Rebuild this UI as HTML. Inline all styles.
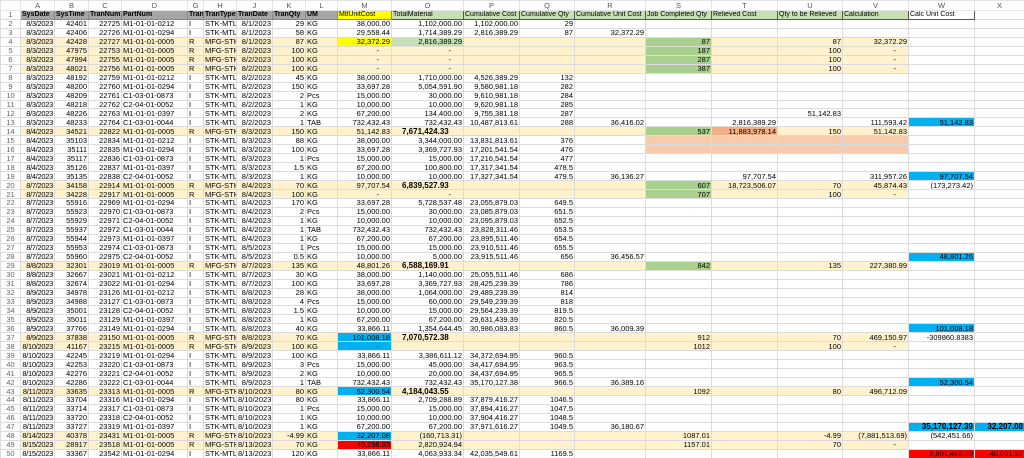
<!DOCTYPE html>
<html><head><meta charset="utf-8"><style>
html,body{margin:0;padding:0;background:#fff;width:1024px;height:458px;overflow:hidden}
table{border-collapse:collapse;table-layout:fixed;width:1024px;font:7.5px "Liberation Sans",sans-serif;color:#000}
td{border:1px solid #dcdcdc;padding:0 1px;line-height:7px;white-space:nowrap;overflow:hidden;text-align:right}
tr{height:8.96px}
tr.h{height:10px}
tr.h td{text-align:center;color:#555;font-size:7.5px;border-color:#e4e4e4;background:#fff}
td:nth-child(1){text-align:center;color:#666;background:#fff;padding:0}
td:nth-child(2){letter-spacing:-0.3px}
td:nth-child(5),td:nth-child(6),td:nth-child(7),td:nth-child(10){text-align:left}
tr.c td{background:#fff2cc}
tr.c td:nth-child(1),tr.c td:nth-child(20),tr.c td:nth-child(21){background:#fff}
tr.c td:nth-child(16){background:#a9d08e}
tr.c.n td:nth-child(16){background:#fff2cc}
tr.r1 td{text-align:left;font-weight:bold;font-size:7px;background:#a6a6a6;border-color:#888;letter-spacing:0}
tr.r1 td:nth-child(1){background:#fff;font-weight:normal;text-align:center;font-size:7.5px;border-color:#dcdcdc}
td.gh{background:#c6e0b4!important;border-color:#555!important;font-weight:normal!important}
td.yh{background:#ffff00!important;border-color:#888!important;font-weight:normal!important}
td.wh{background:#fff!important;border-color:#555!important;font-weight:normal!important}
.y{background:#ffff00!important}
.g{background:#c6e0b4!important}
.bl{background:#00b0f0!important}
.rd{background:#ff0000!important}
.o{background:#f8cbad!important}
.o2{background:#f4b084!important}
.b{font-weight:bold;font-size:8px;text-align:left!important;padding-left:10px}
.bb{font-weight:bold;font-size:8px}
.d{padding-right:12px}
</style></head><body>
<table>
<colgroup><col style="width:20px"><col style="width:34px"><col style="width:34px"><col style="width:33px"><col style="width:66px"><col style="width:16px"><col style="width:33px"><col style="width:36px"><col style="width:33px"><col style="width:32px"><col style="width:54px"><col style="width:72px"><col style="width:56px"><col style="width:55px"><col style="width:71px"><col style="width:66px"><col style="width:66px"><col style="width:65px"><col style="width:66px"><col style="width:66px"><col style="width:50px"></colgroup>
<tr class="h"><td><td>A<td>B<td>C<td>D<td>G<td>H<td>J<td>K<td>L<td>M<td>O<td>P<td>Q<td>R<td>S<td>T<td>U<td>V<td>W<td>X</tr>
<tr class="r1"><td>1<td>SysDate<td>SysTime<td>TranNum<td>PartNum<td>Tran<td>TranType<td>TranDate<td>TranQty<td>UM<td class="yh">MtlUnitCost<td class="gh">TotalMaterial<td class="gh">Cumulative Cost<td class="gh">Cumulative Qty<td class="gh">Cumulative Unit Cost<td class="gh">Job Completed Qty<td class="gh">Relieved Cost<td class="gh">Qty to be Relieved<td class="gh">Calculation<td class="wh">Calc Unit Cost<td style="background:#fff;border-color:#dcdcdc"></tr>
<tr><td>2<td>8/3/2023<td>42401<td>22725<td>M1-01-01-0212<td>I<td>STK-MTL<td>8/1/2023<td>29<td>KG<td>38,000.00<td>1,102,000.00<td>1,102,000.00<td>29<td><td><td><td><td><td><td></tr>
<tr><td>3<td>8/3/2023<td>42406<td>22726<td>M1-01-01-0294<td>I<td>STK-MTL<td>8/1/2023<td>58<td>KG<td>29,558.44<td>1,714,389.29<td>2,816,389.29<td>87<td>32,372.29<td><td><td><td><td><td></tr>
<tr class="c"><td>4<td>8/3/2023<td>42428<td>22727<td>M1-01-01-0005<td>R<td>MFG-STK<td>8/1/2023<td>87<td>KG<td class="y">32,372.29<td class="g">2,816,389.29<td><td><td><td>87<td><td>87<td>32,372.29<td><td></tr>
<tr class="c"><td>5<td>8/3/2023<td>47975<td>22753<td>M1-01-01-0005<td>R<td>MFG-STK<td>8/2/2023<td>100<td>KG<td class="d">-<td class="d">-<td><td><td><td>187<td><td>100<td class="d">-<td><td></tr>
<tr class="c"><td>6<td>8/3/2023<td>47994<td>22755<td>M1-01-01-0005<td>R<td>MFG-STK<td>8/2/2023<td>100<td>KG<td class="d">-<td class="d">-<td><td><td><td>287<td><td>100<td class="d">-<td><td></tr>
<tr class="c"><td>7<td>8/3/2023<td>48021<td>22756<td>M1-01-01-0005<td>R<td>MFG-STK<td>8/2/2023<td>100<td>KG<td class="d">-<td class="d">-<td><td><td><td>387<td><td>100<td class="d">-<td><td></tr>
<tr><td>8<td>8/3/2023<td>48192<td>22759<td>M1-01-01-0212<td>I<td>STK-MTL<td>8/2/2023<td>45<td>KG<td>38,000.00<td>1,710,000.00<td>4,526,389.29<td>132<td><td><td><td><td><td><td></tr>
<tr><td>9<td>8/3/2023<td>48200<td>22760<td>M1-01-01-0294<td>I<td>STK-MTL<td>8/2/2023<td>150<td>KG<td>33,697.28<td>5,054,591.90<td>9,580,981.18<td>282<td><td><td><td><td><td><td></tr>
<tr><td>10<td>8/3/2023<td>48209<td>22761<td>C1-03-01-0873<td>I<td>STK-MTL<td>8/2/2023<td>2<td>Pcs<td>15,000.00<td>30,000.00<td>9,610,981.18<td>284<td><td><td><td><td><td><td></tr>
<tr><td>11<td>8/3/2023<td>48218<td>22762<td>C2-04-01-0052<td>I<td>STK-MTL<td>8/2/2023<td>1<td>KG<td>10,000.00<td>10,000.00<td>9,620,981.18<td>285<td><td><td><td><td><td><td></tr>
<tr><td>12<td>8/3/2023<td>48226<td>22763<td>M1-01-01-0397<td>I<td>STK-MTL<td>8/2/2023<td>2<td>KG<td>67,200.00<td>134,400.00<td>9,755,381.18<td>287<td><td><td><td>51,142.83<td><td><td></tr>
<tr><td>13<td>8/3/2023<td>48233<td>22764<td>C1-03-01-0044<td>I<td>STK-MTL<td>8/2/2023<td>1<td>TAB<td>732,432.43<td>732,432.43<td>10,487,813.61<td>288<td>36,416.02<td><td>2,816,389.29<td><td>111,593.42<td class="bl">51,142.83<td></tr>
<tr class="c"><td>14<td>8/4/2023<td>34521<td>22822<td>M1-01-01-0005<td>R<td>MFG-STK<td>8/3/2023<td>150<td>KG<td>51,142.83<td class="b">7,671,424.33<td><td><td><td>537<td class="o2">11,883,978.14<td>150<td>51,142.83<td><td></tr>
<tr><td>15<td>8/4/2023<td>35103<td>22834<td>M1-01-01-0212<td>I<td>STK-MTL<td>8/3/2023<td>88<td>KG<td>38,000.00<td>3,344,000.00<td>13,831,813.61<td>376<td><td class="o"><td class="o"><td class="o"><td class="o"><td><td></tr>
<tr><td>16<td>8/4/2023<td>35111<td>22835<td>M1-01-01-0294<td>I<td>STK-MTL<td>8/3/2023<td>100<td>KG<td>33,697.28<td>3,369,727.93<td>17,201,541.54<td>476<td><td class="o"><td class="o"><td class="o"><td class="o"><td><td></tr>
<tr><td>17<td>8/4/2023<td>35117<td>22836<td>C1-03-01-0873<td>I<td>STK-MTL<td>8/3/2023<td>1<td>Pcs<td>15,000.00<td>15,000.00<td>17,216,541.54<td>477<td><td><td><td><td><td><td></tr>
<tr><td>18<td>8/4/2023<td>35126<td>22837<td>M1-01-01-0397<td>I<td>STK-MTL<td>8/3/2023<td>1.5<td>KG<td>67,200.00<td>100,800.00<td>17,317,341.54<td>478.5<td><td><td><td><td><td><td></tr>
<tr><td>19<td>8/4/2023<td>35135<td>22838<td>C2-04-01-0052<td>I<td>STK-MTL<td>8/3/2023<td>1<td>KG<td>10,000.00<td>10,000.00<td>17,327,341.54<td>479.5<td>36,136.27<td><td>97,707.54<td><td>311,957.26<td class="bl">97,707.54<td></tr>
<tr class="c"><td>20<td>8/7/2023<td>34158<td>22914<td>M1-01-01-0005<td>R<td>MFG-STK<td>8/4/2023<td>70<td>KG<td>97,707.54<td class="b">6,839,527.93<td><td><td><td>607<td>18,723,506.07<td>70<td>45,874.43<td>(173,273.42)<td></tr>
<tr class="c"><td>21<td>8/7/2023<td>34228<td>22917<td>M1-01-01-0005<td>R<td>MFG-STK<td>8/4/2023<td>100<td>KG<td class="d">-<td class="d">-<td><td><td><td>707<td><td>100<td class="d">-<td><td></tr>
<tr><td>22<td>8/7/2023<td>55916<td>22969<td>M1-01-01-0294<td>I<td>STK-MTL<td>8/4/2023<td>170<td>KG<td>33,697.28<td>5,728,537.48<td>23,055,879.03<td>649.5<td><td><td><td><td><td><td></tr>
<tr><td>23<td>8/7/2023<td>55923<td>22970<td>C1-03-01-0873<td>I<td>STK-MTL<td>8/4/2023<td>2<td>Pcs<td>15,000.00<td>30,000.00<td>23,085,879.03<td>651.5<td><td><td><td><td><td><td></tr>
<tr><td>24<td>8/7/2023<td>55929<td>22971<td>C2-04-01-0052<td>I<td>STK-MTL<td>8/4/2023<td>1<td>KG<td>10,000.00<td>10,000.00<td>23,095,879.03<td>652.5<td><td><td><td><td><td><td></tr>
<tr><td>25<td>8/7/2023<td>55937<td>22972<td>C1-03-01-0044<td>I<td>STK-MTL<td>8/4/2023<td>1<td>TAB<td>732,432.43<td>732,432.43<td>23,828,311.46<td>653.5<td><td><td><td><td><td><td></tr>
<tr><td>26<td>8/7/2023<td>55944<td>22973<td>M1-01-01-0397<td>I<td>STK-MTL<td>8/4/2023<td>1<td>KG<td>67,200.00<td>67,200.00<td>23,895,511.46<td>654.5<td><td><td><td><td><td><td></tr>
<tr><td>27<td>8/7/2023<td>55953<td>22974<td>C1-03-01-0873<td>I<td>STK-MTL<td>8/5/2023<td>1<td>Pcs<td>15,000.00<td>15,000.00<td>23,910,511.46<td>655.5<td><td><td><td><td><td><td></tr>
<tr><td>28<td>8/7/2023<td>55960<td>22975<td>C2-04-01-0052<td>I<td>STK-MTL<td>8/5/2023<td>0.5<td>KG<td>10,000.00<td>5,000.00<td>23,915,511.46<td>656<td>36,456.57<td><td><td><td><td class="bl">48,801.26<td></tr>
<tr class="c"><td>29<td>8/8/2023<td>32301<td>23019<td>M1-01-01-0005<td>R<td>MFG-STK<td>8/7/2023<td>135<td>KG<td>48,801.26<td class="b">6,588,169.91<td><td><td><td>842<td><td>135<td>227,380.99<td><td></tr>
<tr><td>30<td>8/8/2023<td>32667<td>23021<td>M1-01-01-0212<td>I<td>STK-MTL<td>8/7/2023<td>30<td>KG<td>38,000.00<td>1,140,000.00<td>25,055,511.46<td>686<td><td><td><td><td><td><td></tr>
<tr><td>31<td>8/8/2023<td>32674<td>23022<td>M1-01-01-0294<td>I<td>STK-MTL<td>8/7/2023<td>100<td>KG<td>33,697.28<td>3,369,727.93<td>28,425,239.39<td>786<td><td><td><td><td><td><td></tr>
<tr><td>32<td>8/9/2023<td>34978<td>23126<td>M1-01-01-0212<td>I<td>STK-MTL<td>8/8/2023<td>28<td>KG<td>38,000.00<td>1,064,000.00<td>29,489,239.39<td>814<td><td><td><td><td><td><td></tr>
<tr><td>33<td>8/9/2023<td>34988<td>23127<td>C1-03-01-0873<td>I<td>STK-MTL<td>8/8/2023<td>4<td>Pcs<td>15,000.00<td>60,000.00<td>29,549,239.39<td>818<td><td><td><td><td><td><td></tr>
<tr><td>34<td>8/9/2023<td>35001<td>23128<td>C2-04-01-0052<td>I<td>STK-MTL<td>8/8/2023<td>1.5<td>KG<td>10,000.00<td>15,000.00<td>29,564,239.39<td>819.5<td><td><td><td><td><td><td></tr>
<tr><td>35<td>8/9/2023<td>35011<td>23129<td>M1-01-01-0397<td>I<td>STK-MTL<td>8/8/2023<td>1<td>KG<td>67,200.00<td>67,200.00<td>29,631,439.39<td>820.5<td><td><td><td><td><td><td></tr>
<tr><td>36<td>8/9/2023<td>37766<td>23149<td>M1-01-01-0294<td>I<td>STK-MTL<td>8/8/2023<td>40<td>KG<td>33,866.11<td>1,354,644.45<td>30,986,083.83<td>860.5<td>36,009.39<td><td><td><td><td class="bl">101,008.18<td></tr>
<tr class="c n"><td>37<td>8/9/2023<td>37838<td>23150<td>M1-01-01-0005<td>R<td>MFG-STK<td>8/8/2023<td>70<td>KG<td class="bl">101,008.18<td class="b">7,070,572.38<td><td><td><td>912<td><td>70<td>469,150.97<td>-309860.8383<td></tr>
<tr class="c n"><td>38<td>8/10/2023<td>41167<td>23215<td>M1-01-01-0005<td>R<td>MFG-STK<td>8/9/2023<td>100<td>KG<td class="bl d">-<td><td><td><td><td>1012<td><td>100<td class="d">-<td><td></tr>
<tr><td>39<td>8/10/2023<td>42245<td>23219<td>M1-01-01-0294<td>I<td>STK-MTL<td>8/9/2023<td>100<td>KG<td>33,866.11<td>3,386,611.12<td>34,372,694.95<td>960.5<td><td><td><td><td><td><td></tr>
<tr><td>40<td>8/10/2023<td>42253<td>23220<td>C1-03-01-0873<td>I<td>STK-MTL<td>8/9/2023<td>3<td>Pcs<td>15,000.00<td>45,000.00<td>34,417,694.95<td>963.5<td><td><td><td><td><td><td></tr>
<tr><td>41<td>8/10/2023<td>42276<td>23221<td>C2-04-01-0052<td>I<td>STK-MTL<td>8/9/2023<td>2<td>KG<td>10,000.00<td>20,000.00<td>34,437,694.95<td>965.5<td><td><td><td><td><td><td></tr>
<tr><td>42<td>8/10/2023<td>42286<td>23222<td>C1-03-01-0044<td>I<td>STK-MTL<td>8/9/2023<td>1<td>TAB<td>732,432.43<td>732,432.43<td>35,170,127.38<td>966.5<td>36,389.16<td><td><td><td><td class="bl">52,300.54<td></tr>
<tr class="c n"><td>43<td>8/11/2023<td>33635<td>23313<td>M1-01-01-0005<td>R<td>MFG-STK<td>8/10/2023<td>80<td>KG<td class="bl">52,300.54<td class="b">4,184,043.55<td><td><td><td>1092<td><td>80<td>496,712.09<td><td></tr>
<tr><td>44<td>8/11/2023<td>33704<td>23316<td>M1-01-01-0294<td>I<td>STK-MTL<td>8/10/2023<td>80<td>KG<td>33,866.11<td>2,709,288.89<td>37,879,416.27<td>1046.5<td><td><td><td><td><td><td></tr>
<tr><td>45<td>8/11/2023<td>33714<td>23317<td>C1-03-01-0873<td>I<td>STK-MTL<td>8/10/2023<td>1<td>Pcs<td>15,000.00<td>15,000.00<td>37,894,416.27<td>1047.5<td><td><td><td><td><td><td></tr>
<tr><td>46<td>8/11/2023<td>33720<td>23318<td>C2-04-01-0052<td>I<td>STK-MTL<td>8/10/2023<td>1<td>KG<td>10,000.00<td>10,000.00<td>37,904,416.27<td>1048.5<td><td><td><td><td><td><td></tr>
<tr><td>47<td>8/11/2023<td>33727<td>23319<td>M1-01-01-0397<td>I<td>STK-MTL<td>8/10/2023<td>1<td>KG<td>67,200.00<td>67,200.00<td>37,971,616.27<td>1049.5<td>36,180.67<td><td><td><td><td class="bl bb">35,170,127.39<td class="bl bb">32,207.08</tr>
<tr class="c n"><td>48<td>8/14/2023<td>40378<td>23431<td>M1-01-01-0005<td>R<td>MFG-STK<td>8/10/2023<td>-4.99<td>KG<td class="bl">32,207.08<td>(160,713.31)<td><td><td><td>1087.01<td><td>-4.99<td>(7,881,513.69)<td>(542,451.66)<td></tr>
<tr class="c n"><td>49<td>8/15/2023<td>28917<td>23518<td>M1-01-01-0005<td>R<td>MFG-STK<td>8/13/2023<td>70<td>KG<td class="rd">40,298.93<td>2,820,924.94<td><td><td><td>1157.01<td><td>70<td class="d">-<td><td></tr>
<tr><td>50<td>8/15/2023<td>33367<td>23542<td>M1-01-01-0294<td>I<td>STK-MTL<td>8/13/2023<td>120<td>KG<td>33,866.11<td>4,063,933.34<td>42,035,549.61<td>1169.5<td><td><td><td><td><td class="rd">2,801,488.89<td class="rd">40,021.27</tr>
</table>
</body></html>
